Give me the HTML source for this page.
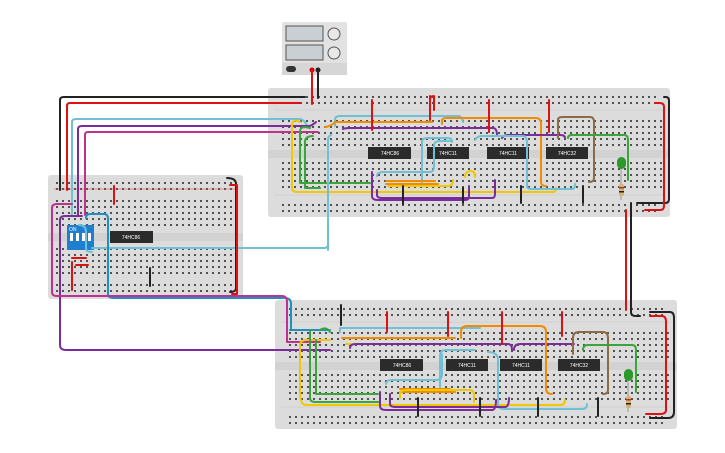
<!DOCTYPE html>
<html><head><meta charset="utf-8"><style>
html,body{margin:0;padding:0;background:#fff;width:725px;height:453px;overflow:hidden}
svg{display:block}
text{font-family:"Liberation Sans",sans-serif}
</style></head><body>
<svg width="725" height="453" viewBox="0 0 725 453" xmlns="http://www.w3.org/2000/svg">
<defs>
<pattern id="h" x="0" y="0" width="6" height="6" patternUnits="userSpaceOnUse">
<rect x="2" y="2" width="2" height="2" fill="#505050"/>
</pattern>
<g id="bb">
<rect x="0" y="0" width="402" height="129" rx="3" fill="#dcdcdc"/>
<rect x="10" y="7" width="380" height="12" fill="url(#h)"/>
<rect x="14" y="28" width="380" height="30" fill="url(#h)"/>
<rect x="0" y="62" width="402" height="8" fill="#d2d2d2"/>
<rect x="14" y="71" width="380" height="30" fill="url(#h)"/>
<rect x="10" y="112" width="380" height="12" fill="url(#h)"/>
<line x1="6" y1="22" x2="396" y2="22" stroke="#cfcfcf"/>
<line x1="6" y1="107" x2="396" y2="107" stroke="#cfcfcf"/>
</g>
</defs>

<!-- PSU -->
<rect x="282" y="22" width="65" height="53" rx="2" fill="#e2e2e2"/>
<rect x="286" y="26" width="37" height="15" fill="#c9cfd2" stroke="#555" stroke-width="1"/>
<rect x="286" y="45" width="37" height="15" fill="#c9cfd2" stroke="#555" stroke-width="1"/>
<circle cx="334" cy="34" r="6" fill="#e8e8e8" stroke="#555"/>
<circle cx="334" cy="53" r="6" fill="#e8e8e8" stroke="#555"/>
<rect x="282" y="63" width="65" height="12" fill="#d6d6d6"/>
<rect x="286" y="66" width="10" height="6" rx="3" fill="#333"/>
<circle cx="312" cy="70" r="2.5" fill="#c00"/>
<circle cx="318" cy="70" r="2.5" fill="#222"/>

<!-- boards -->
<use href="#bb" x="268" y="88"/>
<use href="#bb" x="275" y="300"/>
<g>
<rect x="48" y="175" width="195" height="124" rx="3" fill="#dcdcdc"/>
<rect x="54" y="178" width="182" height="12" fill="url(#h)"/>
<rect x="54" y="196" width="182" height="30" fill="url(#h)"/>
<rect x="48" y="233" width="195" height="8" fill="#d2d2d2"/>
<rect x="54" y="244" width="182" height="30" fill="url(#h)"/>
<rect x="54" y="282" width="182" height="12" fill="url(#h)"/>
<line x1="54" y1="189" x2="236" y2="189" stroke="#d44" stroke-width="0.6"/>
</g>

<!-- chips -->
<g fill="#2b2b2b">
<rect x="368" y="147" width="43" height="12"/><rect x="427" y="147" width="42" height="12"/>
<rect x="487" y="147" width="42" height="12"/><rect x="546" y="147" width="42" height="12"/>
<rect x="380" y="359" width="43" height="12"/><rect x="446" y="359" width="42" height="12"/>
<rect x="500" y="359" width="42" height="12"/><rect x="558" y="359" width="42" height="12"/>
<rect x="110" y="231" width="43" height="12"/>
</g>
<g fill="#fff" font-size="5" text-anchor="middle">
<text x="390" y="155">74HC86</text><text x="448" y="155">74HC11</text><text x="508" y="155">74HC11</text><text x="567" y="155">74HC32</text>
<text x="402" y="367">74HC86</text><text x="467" y="367">74HC11</text><text x="521" y="367">74HC11</text><text x="579" y="367">74HC32</text>
<text x="131" y="239">74HC86</text>
</g>
<!-- DIP switch -->
<rect x="67" y="225" width="27" height="25" fill="#1e7fd0"/>
<g fill="#fff"><rect x="70" y="233" width="3" height="8"/><rect x="76" y="233" width="3" height="8"/><rect x="82" y="233" width="3" height="8"/><rect x="88" y="233" width="3" height="8"/></g>
<text x="69" y="231" font-size="5" fill="#fff">ON</text>

<g fill="none" stroke-width="2" stroke-linecap="round" stroke-linejoin="round">
<path d="M318 70V98" stroke="#222"/><path d="M312 70V104" stroke="#d11"/>
<path d="M60 190V100Q60 97 64 97H305" stroke="#222"/>
<path d="M67 190V106Q67 103 70 103H300" stroke="#d11"/>
<path d="M72 215V122Q72 119 76 119H300Q305 120 307 126" stroke="#6fc0d4"/>
<path d="M78 215V129Q78 126 82 126H310Q314 124 316 122" stroke="#7a2d9a"/>
<path d="M85 215V135Q85 132 88 132H318" stroke="#c0308f"/>
<path d="M300 122Q292 118 292 126V188Q292 192 298 192H553Q556 192 556 188" stroke="#f0c800"/>
<path d="M310 128Q300 125 300 132V183H370" stroke="#3aa53a"/>
<path d="M313 136Q305 136 305 142V188H320" stroke="#3aa53a"/>
<path d="M335 126V120Q335 116 340 116H458Q462 116 463 122" stroke="#6fc0d4"/>
<path d="M325 127Q332 126 335 122H432" stroke="#f08c00"/>
<path d="M442 124V121Q442 118 446 118H536Q541 118 541 124V182Q541 186 546 186" stroke="#f08c00"/>
<path d="M343 129Q345 128 350 128H493Q497 128 497 136" stroke="#7a2d9a"/>
<path d="M502 138Q504 135 508 135H560Q565 135 565 138" stroke="#7a2d9a"/>
<path d="M328 250V140Q328 136 331 135" stroke="#6fc0d4"/>
<path d="M92 248H324Q328 248 328 244" stroke="#6fc0d4"/>
<path d="M372 100V130" stroke="#d11"/><path d="M430 100Q430 96 434 96V110" stroke="#d11"/>
<path d="M430 96V120" stroke="#d11"/><path d="M489 100V132" stroke="#d11"/><path d="M549 100V132" stroke="#d11"/>
<path d="M558 138V120Q558 117 562 117H590Q594 117 594 122V178Q594 182 589 182" stroke="#8b6b45"/>
<path d="M568 138Q568 135 572 135H624Q628 135 628 140V180" stroke="#3aa53a"/>
<path d="M422 186V142Q422 138 427 138H448Q452 138 452 142" stroke="#6fc0d4"/>
<path d="M377 176Q377 172 384 172H430Q434 172 434 166V146Q434 141 440 141H452" stroke="#6fc0d4"/>
<path d="M475 140Q477 136 482 136H523Q527 136 527 144V186Q527 189 532 189H572Q575 189 575 184" stroke="#6fc0d4"/>
<path d="M372 172V196Q372 200 378 200H465Q469 200 469 196V186" stroke="#7a2d9a"/>
<path d="M377 190V195Q377 198 382 198H492Q495 198 495 194V180" stroke="#7a2d9a"/>
<path d="M386 181H435" stroke="#f08c00"/><path d="M386 184H438" stroke="#f08c00"/>
<path d="M388 186H448Q453 186 453 180" stroke="#f0c800"/>
<path d="M465 177Q465 171 471 171Q475 171 475 177" stroke="#f0c800"/>
<path d="M403 186V204" stroke="#222"/><path d="M463 188V203" stroke="#222"/>
<path d="M521 186V203" stroke="#222"/><path d="M583 186V203" stroke="#222"/>
<path d="M664 97H666Q669 97 669 101V199Q669 203 665 203H637" stroke="#222"/>
<path d="M655 103H660Q664 103 664 107V206Q664 210 660 210H645" stroke="#d11"/>
<path d="M631 203V312Q631 316 636 316H640" stroke="#222"/>
<path d="M626 210V310" stroke="#d11"/>
<path d="M227 178Q236 178 236 184V288Q236 292 230 292" stroke="#222"/>
<path d="M230 185H237V294H232" stroke="#d11"/>
<path d="M114 186V204" stroke="#d11"/>
<path d="M150 268V286" stroke="#222"/>
<path d="M72 262V290" stroke="#d11"/>
<path d="M72 258H86M76 265H88" stroke="#d11"/>
<path d="M60 220Q60 216 65 216H82M60 220V345Q60 350 66 350H330" stroke="#7a2d9a"/>
<path d="M86 218Q86 214 90 214H104Q108 214 108 219V294Q108 298 114 298H285Q291 298 291 304V330" stroke="#1e90c0"/>
<path d="M52 208Q52 204 57 204H72M52 208V292Q52 296 57 296H282Q287 296 287 302V342H320" stroke="#c0308f"/>
<path d="M79 225Q86 225 86 232V248Q86 252 92 252" stroke="#6fc0d4"/>
<path d="M290 330H330" stroke="#1e90c0"/>
<path d="M300 392V346Q300 340 306 340H330" stroke="#f0c800"/>
<path d="M300 392Q300 405 306 405H560Q565 405 565 400" stroke="#f0c800"/>
<path d="M310 330V398Q310 402 316 402H380" stroke="#3aa53a"/>
<path d="M316 340V394H378" stroke="#3aa53a"/>
<path d="M320 330Q326 326 330 332" stroke="#3aa53a"/>
<path d="M340 332V328H480" stroke="#6fc0d4"/>
<path d="M342 338H455" stroke="#f08c00"/>
<path d="M346 344H392" stroke="#f0c800"/>
<path d="M350 348Q350 344 356 344H508Q512 344 512 350" stroke="#7a2d9a"/>
<path d="M514 350Q514 344 520 344H574" stroke="#7a2d9a"/>
<path d="M461 338V332Q461 326 467 326H540Q546 326 546 332V388Q546 394 552 394" stroke="#f08c00"/>
<path d="M387 312V332" stroke="#d11"/><path d="M448 312V336" stroke="#d11"/>
<path d="M502 312V344" stroke="#d11"/><path d="M562 312V336" stroke="#d11"/>
<path d="M341 305V325" stroke="#222"/>
<path d="M573 354V338Q573 332 579 332H603Q608 332 608 338V390Q608 394 603 394" stroke="#8b6b45"/>
<path d="M583 350Q583 345 588 345H632Q636 345 636 350V392" stroke="#3aa53a"/>
<path d="M440 388V356Q440 350 446 350H475" stroke="#6fc0d4"/>
<path d="M386 384Q386 380 392 380H436Q442 380 442 374V354" stroke="#6fc0d4"/>
<path d="M488 352Q498 352 498 360V404Q498 409 504 409H582Q587 409 587 404" stroke="#6fc0d4"/>
<path d="M380 392V406Q380 410 386 410H492Q496 410 496 400" stroke="#7a2d9a"/>
<path d="M390 394V404Q390 407 396 407H505Q509 407 509 398" stroke="#7a2d9a"/>
<path d="M400 389H450M400 392H455" stroke="#f08c00"/>
<path d="M400 398V394Q400 390 406 390H470Q474 390 474 396V402" stroke="#f0c800"/>
<path d="M418 398V416" stroke="#222"/><path d="M480 398V416" stroke="#222"/>
<path d="M538 398V416" stroke="#222"/><path d="M598 398V416" stroke="#222"/>
<path d="M650 312H670Q674 312 674 318V412Q674 418 668 418H650" stroke="#222"/>
<path d="M650 316H662Q666 316 666 322V410Q666 414 660 414H646" stroke="#d11"/>
</g>
<rect x="617" y="157" width="9" height="12" rx="4.5" fill="#2a9a2a"/>
<line x1="621" y1="169" x2="621" y2="200" stroke="#999" stroke-width="1"/>
<rect x="619" y="184" width="5" height="12" rx="2" fill="#d8b070"/>
<rect x="619" y="187" width="5" height="1.5" fill="#a33"/><rect x="619" y="191" width="5" height="1.5" fill="#222"/>
<rect x="624" y="369" width="9" height="12" rx="4.5" fill="#2a9a2a"/>
<line x1="628" y1="381" x2="628" y2="412" stroke="#999" stroke-width="1"/>
<rect x="626" y="396" width="5" height="12" rx="2" fill="#d8b070"/>
<rect x="626" y="399" width="5" height="1.5" fill="#a33"/><rect x="626" y="403" width="5" height="1.5" fill="#222"/>
</svg>
</body></html>
